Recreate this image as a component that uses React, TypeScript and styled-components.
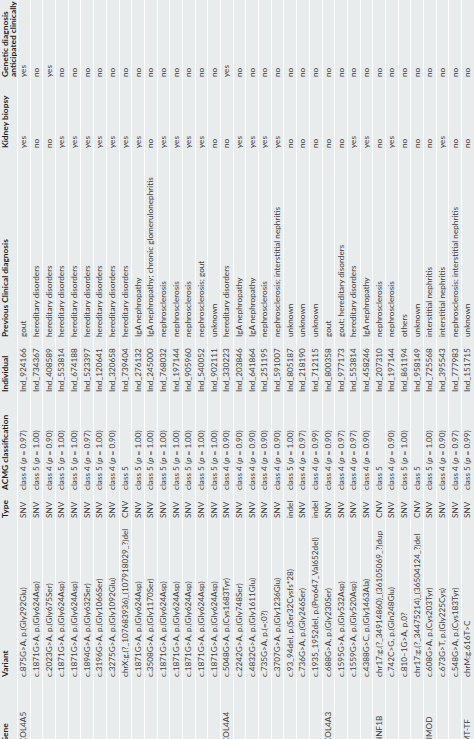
import React from "react";
import styled, { createGlobalStyle } from "styled-components";

const GlobalStyle = createGlobalStyle`
  html, body {
    margin: 0;
    padding: 0;
    background: #ffffff;
  }
`;

const COLUMNS = "62px 159px 28px 98px 55px 189px 71px 1fr";

const Page = styled.div`
  width: 474px;
  height: 739px;
  overflow: hidden;
  background: #e9eced;
`;

// the table is printed sideways, so it is laid out upright and turned a quarter
const Sheet = styled.div`
  width: 739px;
  height: 474px;
  transform-origin: 0 0;
  transform: translateY(739px) rotate(-90deg);
  display: flex;
  flex-direction: column;
  background: #e9eced;
  font-family: Lato, "Open Sans", sans-serif;
  color: #3b3b3b;
`;

const HeadRow = styled.div`
  height: 17px;
  flex: none;
  display: grid;
  grid-template-columns: ${COLUMNS};
  align-items: start;
  font-weight: 700;
  font-size: 8.4px;
  line-height: 8px;
  color: #1c1c1c;
`;

const Row = styled.div`
  flex: 1;
  display: grid;
  grid-template-columns: ${COLUMNS};
  align-items: center;
  border-top: 1px solid #ffffff;
  font-size: 8.2px;
  line-height: 9px;
`;

const Cell = styled.div<{ $shift?: number }>`
  white-space: nowrap;
  text-indent: ${(p) => p.$shift ?? 0}px;
`;

const HeadCell = styled.div<{ $shift?: number }>`
  white-space: nowrap;
  padding-top: 0.5px;
  text-indent: ${(p) => p.$shift ?? 0}px;
`;

type Item = {
  gene?: string;
  variant: string;
  type: string;
  cls: string;
  p?: string;
  ind: string;
  dx: string;
  biopsy: string;
  anticipated: string;
};

const rows: Item[] = [
  { gene: "COL4A5", variant: "c.875G>A, p.(Gly292Glu)", type: "SNV", cls: "4", p: "0.97", ind: "924166", dx: "gout", biopsy: "yes", anticipated: "yes" },
  { variant: "c.1871G>A, p.(Gly624Asp)", type: "SNV", cls: "5", p: "1.00", ind: "734367", dx: "hereditary disorders", biopsy: "no", anticipated: "no" },
  { variant: "c.2023G>A, p.(Gly675Ser)", type: "SNV", cls: "4", p: "0.90", ind: "408589", dx: "hereditary disorders", biopsy: "no", anticipated: "yes" },
  { variant: "c.1871G>A, p.(Gly624Asp)", type: "SNV", cls: "5", p: "1.00", ind: "553814", dx: "hereditary disorders", biopsy: "yes", anticipated: "no" },
  { variant: "c.1871G>A, p.(Gly624Asp)", type: "SNV", cls: "5", p: "1.00", ind: "674188", dx: "hereditary disorders", biopsy: "yes", anticipated: "no" },
  { variant: "c.1894G>A, p.(Gly632Ser)", type: "SNV", cls: "4", p: "0.97", ind: "523397", dx: "hereditary disorders", biopsy: "yes", anticipated: "no" },
  { variant: "c.3196G>A, p.(Gly1066Ser)", type: "SNV", cls: "5", p: "1.00", ind: "120641", dx: "hereditary disorders", biopsy: "yes", anticipated: "no" },
  { variant: "c.3275G>A, p.(Gly1092Glu)", type: "SNV", cls: "4", p: "0.90", ind: "320658", dx: "hereditary disorders", biopsy: "yes", anticipated: "no" },
  { variant: "chrX:g.(?_107683936)_(107918029_?)del", type: "CNV", cls: "5", ind: "739404", dx: "hereditary disorders", biopsy: "yes", anticipated: "no" },
  { variant: "c.1871G>A, p.(Gly624Asp)", type: "SNV", cls: "5", p: "1.00", ind: "276132", dx: "IgA nephropathy", biopsy: "yes", anticipated: "no" },
  { variant: "c.3508G>A, p.(Gly1170Ser)", type: "SNV", cls: "5", p: "1.00", ind: "245000", dx: "IgA nephropathy; chronic glomerulonephritis", biopsy: "no", anticipated: "no" },
  { variant: "c.1871G>A, p.(Gly624Asp)", type: "SNV", cls: "5", p: "1.00", ind: "768032", dx: "nephrosclerosis", biopsy: "yes", anticipated: "no" },
  { variant: "c.1871G>A, p.(Gly624Asp)", type: "SNV", cls: "5", p: "1.00", ind: "197144", dx: "nephrosclerosis", biopsy: "yes", anticipated: "no" },
  { variant: "c.1871G>A, p.(Gly624Asp)", type: "SNV", cls: "5", p: "1.00", ind: "905960", dx: "nephrosclerosis", biopsy: "yes", anticipated: "no" },
  { variant: "c.1871G>A, p.(Gly624Asp)", type: "SNV", cls: "5", p: "1.00", ind: "540052", dx: "nephrosclerosis; gout", biopsy: "yes", anticipated: "no" },
  { variant: "c.1871G>A, p.(Gly624Asp)", type: "SNV", cls: "5", p: "1.00", ind: "902111", dx: "unknown", biopsy: "no", anticipated: "no" },
  { gene: "COL4A4", variant: "c.5048G>A, p.(Cys1683Tyr)", type: "SNV", cls: "4", p: "0.90", ind: "330223", dx: "hereditary disorders", biopsy: "no", anticipated: "yes" },
  { variant: "c.2242G>A, p.(Gly748Ser)", type: "SNV", cls: "4", p: "0.90", ind: "203846", dx: "IgA nephropathy", biopsy: "yes", anticipated: "no" },
  { variant: "c.4832G>A, p.(Gly1611Glu)", type: "SNV", cls: "4", p: "0.90", ind: "641864", dx: "IgA nephropathy", biopsy: "yes", anticipated: "no" },
  { variant: "c.735G>A, p.(=;0?)", type: "SNV", cls: "4", p: "0.90", ind: "251195", dx: "nephrosclerosis", biopsy: "yes", anticipated: "no" },
  { variant: "c.3707G>A, p.(Gly1236Glu)", type: "SNV", cls: "4", p: "0.90", ind: "591007", dx: "nephrosclerosis; interstitial nephritis", biopsy: "yes", anticipated: "no" },
  { variant: "c.93_94del, p.(Ser32Cysfs*28)", type: "indel", cls: "5", p: "1.00", ind: "805187", dx: "unknown", biopsy: "no", anticipated: "no" },
  { variant: "c.736G>A, p.(Gly246Ser)", type: "SNV", cls: "4", p: "0.97", ind: "218190", dx: "unknown", biopsy: "no", anticipated: "no" },
  { variant: "c.1935_1952del, p.(Pro647_Val652del)", type: "indel", cls: "4", p: "0.99", ind: "712115", dx: "unknown", biopsy: "no", anticipated: "no" },
  { gene: "COL4A3", variant: "c.688G>A, p.(Gly230Ser)", type: "SNV", cls: "4", p: "0.90", ind: "800358", dx: "gout", biopsy: "no", anticipated: "no" },
  { variant: "c.1595G>A, p.(Gly532Asp)", type: "SNV", cls: "4", p: "0.97", ind: "977173", dx: "gout; hereditary disorders", biopsy: "no", anticipated: "no" },
  { variant: "c.1559G>A, p.(Gly520Asp)", type: "SNV", cls: "4", p: "0.97", ind: "553814", dx: "hereditary disorders", biopsy: "yes", anticipated: "no" },
  { variant: "c.4388G>C, p.(Gly1463Ala)", type: "SNV", cls: "4", p: "0.90", ind: "458246", dx: "IgA nephropathy", biopsy: "yes", anticipated: "no" },
  { gene: "HNF1B", variant: "chr17:g.(?_34914860)_(36105069_?)dup", type: "CNV", cls: "5", ind: "207310", dx: "nephrosclerosis", biopsy: "no", anticipated: "no" },
  { variant: "c.742C>G, p.(Gln248Glu)", type: "SNV", cls: "4", p: "0.90", ind: "197144", dx: "nephrosclerosis", biopsy: "yes", anticipated: "no" },
  { variant: "c.810\u20131G>A, p.0?", type: "SNV", cls: "5", p: "1.00", ind: "861194", dx: "others", biopsy: "no", anticipated: "no" },
  { variant: "chr17:g.(?_34475214)_(36504124_?)del", type: "CNV", cls: "5", ind: "958149", dx: "unknown", biopsy: "no", anticipated: "no" },
  { gene: "UMOD", variant: "c.608G>A, p.(Cys203Tyr)", type: "SNV", cls: "5", p: "1.00", ind: "725568", dx: "interstitial nephritis", biopsy: "no", anticipated: "no" },
  { variant: "c.673G>T, p.(Gly225Cys)", type: "SNV", cls: "4", p: "0.90", ind: "395543", dx: "interstitial nephritis", biopsy: "yes", anticipated: "no" },
  { variant: "c.548G>A, p.(Cys183Tyr)", type: "SNV", cls: "4", p: "0.97", ind: "777983", dx: "nephrosclerosis; interstitial nephritis", biopsy: "no", anticipated: "no" },
  { gene: "MT-TF", variant: "chrM:g.616T>C", type: "SNV", cls: "5", p: "0.99", ind: "151715", dx: "unknown", biopsy: "no", anticipated: "no" },
];

const App = () => {
  return (
    <>
      <GlobalStyle />
      <Page>
        <Sheet>
          <HeadRow>
            <HeadCell $shift={-4}>Gene</HeadCell>
            <HeadCell>Variant</HeadCell>
            <HeadCell>Type</HeadCell>
            <HeadCell>ACMG classification</HeadCell>
            <HeadCell>Individual</HeadCell>
            <HeadCell>Previous Clinical diagnosis</HeadCell>
            <HeadCell>Kidney biopsy</HeadCell>
            <HeadCell>
              Genetic diagnosis
              <br />
              anticipated clinically
            </HeadCell>
          </HeadRow>
          {rows.map((r, i) => (
            <Row key={i}>
              <Cell $shift={-4}>{r.gene ?? ""}</Cell>
              <Cell>{r.variant}</Cell>
              <Cell>{r.type}</Cell>
              <Cell>
                class {r.cls}
                {r.p ? (
                  <>
                    {" ("}
                    <i>p</i> = {r.p})
                  </>
                ) : null}
              </Cell>
              <Cell>Ind_{r.ind}</Cell>
              <Cell>{r.dx}</Cell>
              <Cell>{r.biopsy}</Cell>
              <Cell>{r.anticipated}</Cell>
            </Row>
          ))}
        </Sheet>
      </Page>
    </>
  );
};

export default App;
